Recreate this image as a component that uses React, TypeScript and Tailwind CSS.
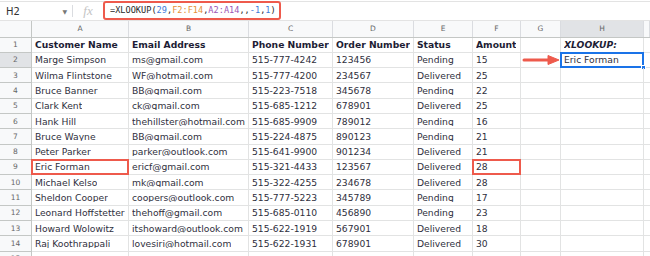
const cols = ['A', 'B', 'C', 'D', 'E', 'F', 'G', 'H', ''];

const rows: string[][] = [
  ['Customer Name', 'Email Address', 'Phone Number', 'Order Number', 'Status', 'Amount', '', 'XLOOKUP:'],
  ['Marge Simpson', 'ms@gmail.com', '515-777-4242', '123456', 'Pending', '15', '', 'Eric Forman'],
  ['Wilma Flintstone', 'WF@hotmail.com', '515-777-4200', '234567', 'Delivered', '25', '', ''],
  ['Bruce Banner', 'BB@gmail.com', '515-223-7518', '345678', 'Pending', '22', '', ''],
  ['Clark Kent', 'ck@gmail.com', '515-685-1212', '678901', 'Delivered', '25', '', ''],
  ['Hank Hill', 'thehillster@hotmail.com', '515-685-9909', '789012', 'Pending', '16', '', ''],
  ['Bruce Wayne', 'BB@gmail.com', '515-224-4875', '890123', 'Pending', '21', '', ''],
  ['Peter Parker', 'parker@outlook.com', '515-641-9900', '901234', 'Delivered', '21', '', ''],
  ['Eric Forman', 'ericf@gmail.com', '515-321-4433', '123567', 'Delivered', '28', '', ''],
  ['Michael Kelso', 'mk@gmail.com', '515-322-4255', '234678', 'Delivered', '28', '', ''],
  ['Sheldon Cooper', 'coopers@outlook.com', '515-777-5223', '345789', 'Pending', '17', '', ''],
  ['Leonard Hoffstetter', 'thehoff@gmail.com', '515-685-0110', '456890', 'Pending', '23', '', ''],
  ['Howard Wolowitz', 'itshoward@outlook.com', '515-622-1919', '567901', 'Delivered', '18', '', ''],
  ['Raj Koothrappali', 'lovesiri@hotmail.com', '515-622-1931', '678901', 'Delivered', '30', '', ''],
  ['', '', '', '', '', '', '', ''],
];

const grid = 'grid grid-cols-[32px_97px_120px_84px_81px_59px_48px_40px_83px_1fr]';

function Cell({ r, c, text }: { r: number; c: number; text: string }) {
  const header = r === 0;
  const italic = header && c === 7;
  const redBox = r === 8 && (c === 0 || c === 5);
  const selected = r === 1 && c === 7;
  return (
    <div className="relative h-[15.3px] border-b border-r border-[#e2e3e3] flex items-center pl-[3px] overflow-visible">
      <span
        className={
          'whitespace-nowrap overflow-hidden text-[9.2px] leading-none ' +
          (header ? 'font-bold text-[#1d1d35] ' : 'text-[#2f2f3d] ') +
          (italic ? 'italic' : '')
        }
      >
        {text}
      </span>
      {redBox && (
        <div className="absolute left-[-1px] right-[-1px] top-[-1px] bottom-[-1px] border-2 border-[#ee5a4c]" />
      )}
      {selected && (
        <>
          <div className="absolute left-[-1px] right-[-1px] top-[-1px] bottom-[-1px] border-2 border-[#1a73e8]" />
          <div className="absolute right-[-3px] bottom-[-3px] w-[5px] h-[5px] bg-[#1a73e8] border border-white" />
        </>
      )}
    </div>
  );
}

export default function App() {
  return (
    <div className="relative w-[650px] h-[256px] overflow-hidden bg-white font-['DejaVu_Sans',sans-serif]">
      {/* formula bar */}
      <div className="h-[20px] border-t border-b border-[#e3e3e3] mt-[1px] flex items-center">
        <div className="w-[72px] flex items-center pl-[6px] text-[10px] text-[#333]">
          <span className="flex-1">H2</span>
          <span className="text-[6px] text-[#777] mr-[5px]">▼</span>
        </div>
        <div className="w-px h-[12px] bg-[#dadce0]" />
        <span className="w-[30px] text-center italic text-[13px] text-[#c4c4c4] font-['Liberation_Serif',serif]">fx</span>
        <div className="h-[19px] w-[178px] mt-[-1px] border-2 border-[#ee5a4c] rounded-[3px] flex items-center pl-[5px] font-['DejaVu_Sans_Mono',monospace] text-[8.6px] text-[#1f1f1f]">
          <span>=XLOOKUP(</span>
          <span className="text-[#3c78d8]">29</span>
          <span>,</span>
          <span className="text-[#e69138]">F2:F14</span>
          <span>,</span>
          <span className="text-[#9c54b5]">A2:A14</span>
          <span>,,</span>
          <span className="text-[#3c78d8]">-1</span>
          <span>,</span>
          <span className="text-[#3c78d8]">1</span>
          <span>)</span>
        </div>
      </div>

      {/* column headers */}
      <div className={grid + ' h-[16.5px] bg-[#f8f9fa] border-b border-[#c4c7c5]'}>
        <div className="border-r border-[#c4c7c5]" />
        {cols.map((c, i) => (
          <div
            key={i}
            className={
              'flex items-center justify-center text-[7.5px] text-[#666] border-r border-[#dadce0] ' +
              (c === 'H' ? 'bg-[#e1e3e6]' : '')
            }
          >
            {c}
          </div>
        ))}
      </div>

      {/* rows */}
      {rows.map((row, r) => (
        <div key={r} className={grid}>
          <div
            className={
              'h-[15.3px] flex items-center justify-center text-[7.5px] text-[#666] border-b border-r border-[#c4c7c5] ' +
              (r === 1 ? 'bg-[#e1e3e6]' : 'bg-[#f8f9fa]')
            }
          >
            {r + 1}
          </div>
          {row.map((t, c) => (
            <Cell key={c} r={r} c={c} text={t} />
          ))}
          <div className="h-[15.3px] border-b border-[#e2e3e3]" />
        </div>
      ))}

      {/* arrow pointing at the result */}
      <svg className="absolute left-[522px] top-[54px]" width="40" height="12" viewBox="0 0 40 12">
        <line x1="2" y1="6" x2="28" y2="6" stroke="#ee5a4c" strokeWidth="3" strokeLinecap="round" />
        <path d="M26 1.5 L37 6 L26 10.5 Z" fill="#ee5a4c" stroke="#ee5a4c" strokeWidth="1" strokeLinejoin="round" />
      </svg>
    </div>
  );
}
